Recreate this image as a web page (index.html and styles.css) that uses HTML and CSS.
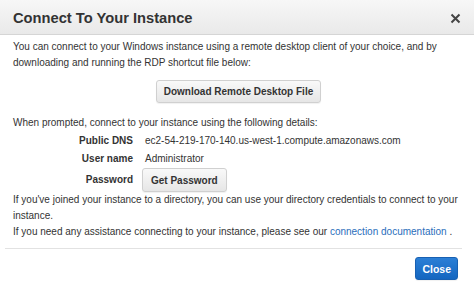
FILE: index.html
```html
<!DOCTYPE html>
<html>
<head>
<meta charset="utf-8">
<link rel="stylesheet" href="styles.css">
</head>
<body>
<div class="modal">
  <div class="header">
    <h1 class="title">Connect To Your Instance</h1>
    <span class="dismiss">
      <svg width="11" height="11" viewBox="0 0 11 11"><path d="M1.5 1.5 L9.5 9.5 M9.5 1.5 L1.5 9.5" stroke="#444" stroke-width="2" stroke-linecap="butt"/></svg>
    </span>
  </div>
  <div class="content">
    <p class="text">You can connect to your Windows instance using a remote desktop client of your choice, and by downloading and running the RDP shortcut file below:</p>
    <div class="center-row">
      <button class="btn">Download Remote Desktop File</button>
    </div>
    <p class="text gap-top">When prompted, connect to your instance using the following details:</p>
    <div class="details">
      <span class="label">Public DNS</span><span class="value">ec2-54-219-170-140.us-west-1.compute.amazonaws.com</span>
      <span class="label">User name</span><span class="value">Administrator</span>
      <span class="label">Password</span><span class="value"><button class="btn btn-small">Get Password</button></span>
    </div>
    <p class="text">If you've joined your instance to a directory, you can use your directory credentials to connect to your instance.</p>
    <p class="text">If you need any assistance connecting to your instance, please see our <a class="link" href="#">connection documentation</a> .</p>
  </div>
  <div class="footer">
    <button class="btn btn-primary">Close</button>
  </div>
</div>
</body>
</html>
```
FILE: styles.css
```css
html, body {
  margin: 0;
  padding: 0;
  background: #ffffff;
}
body {
  font-family: "Liberation Sans", Arial, sans-serif;
  color: #333333;
  width: 474px;
  height: 286px;
  overflow: hidden;
}
.modal {
  width: 474px;
  height: 286px;
  display: flex;
  flex-direction: column;
}
.header {
  height: 35px;
  box-sizing: border-box;
  border-bottom: 1px solid #d5d5d5;
  background: linear-gradient(#f7f7f7, #e9e9e9);
  display: flex;
  align-items: center;
  justify-content: space-between;
  padding: 0 13px 0 13px;
}
.title {
  margin: 0;
  font-size: 14.7px;
  font-weight: bold;
  color: #333;
  padding-top: 1px;
}
.dismiss {
  display: flex;
  align-items: center;
  padding-top: 2px;
}
.content {
  padding: 4px 13px 0 13px;
  font-size: 10px;
  line-height: 16px;
}
.text {
  margin: 0;
}
.gap-top {
  margin-top: 12px;
}
.center-row {
  display: flex;
  justify-content: center;
  padding-top: 9px;
  padding-left: 3px;
}
.btn {
  font-family: "Liberation Sans", Arial, sans-serif;
  font-weight: bold;
  font-size: 10px;
  color: #333;
  background: linear-gradient(#f9f9f9, #e6e6e6);
  border: 1px solid #d0d0d0;
  border-radius: 3px;
  height: 23px;
  padding: 0 7px;
  box-shadow: 0 1px 1px rgba(0,0,0,0.06);
}
.details {
  display: grid;
  grid-template-columns: 120px auto;
  column-gap: 12px;
  align-items: center;
  margin-top: 1px;
}
.label {
  text-align: right;
  font-weight: bold;
}
.details .label, .details .value {
  line-height: 18px;
}
.btn-small {
  height: 24px;
  padding: 0 8px;
  margin-left: -3px;
}
.link {
  color: #2a6ebb;
  text-decoration: none;
}
.footer {
  margin: 8px 12px 0 5px;
  border-top: 1px solid #e2e2e2;
  display: flex;
  justify-content: flex-end;
  padding-top: 8px;
}
.btn-primary {
  color: #fff;
  background: linear-gradient(#2b7fd6, #1466c0);
  border: 1px solid #1860b2;
  height: 23px;
  padding: 0 6px;
  margin-right: 4px;
  font-size: 10.5px;
}
```
